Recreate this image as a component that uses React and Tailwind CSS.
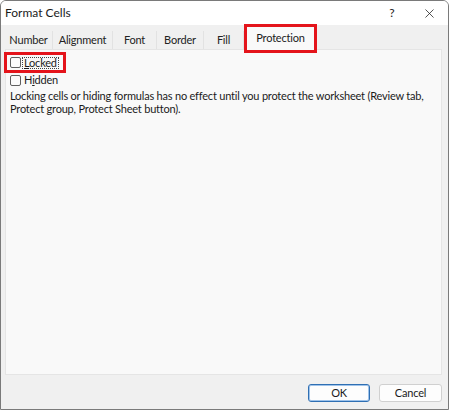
import { X } from "lucide-react";

const tabs = [
  { label: "Number", w: "w-[48px]" },
  { label: "Alignment", w: "w-[60px]" },
  { label: "Font", w: "w-[44px]" },
  { label: "Border", w: "w-[47px]" },
  { label: "Fill", w: "w-[40px]" },
];

export default function App() {
  return (
    <div
      className="w-[450px] h-[410px] bg-white text-[11px] text-[#1b1b1b] tracking-[-0.2px]"
      style={{ fontFamily: '"Segoe UI", Lato, "Noto Sans", sans-serif' }}
    >
      <div className="w-[449px] h-[410px] flex flex-col border border-[#7a7a7a] rounded-t-[6px] overflow-hidden bg-[#f0f0f0]">
        <div className="h-[24px] bg-white flex items-center pl-[4px] shrink-0 text-[12px] tracking-normal">
          <span className="flex-1">Format Cells</span>
          <span className="w-[20px] text-center text-[12px] mr-[17px]">?</span>
          <span className="w-[20px] flex justify-center mr-[9px]">
            <X size={15} strokeWidth={1.2} />
          </span>
        </div>

        <div className="flex-1 flex flex-col pl-[4px] pr-[6px]">
          <div className="flex items-end h-[24px]">
            {tabs.map((t) => (
              <div
                key={t.label}
                className={`${t.w} h-[18px] flex items-center justify-center border-r border-[#e2e2e2] text-[#222]`}
              >
                {t.label}
              </div>
            ))}
            <div className="ml-[3px] mb-[-1px] w-[67px] h-[23px] flex items-center justify-center bg-[#f9f9f9] outline-[3px] outline-[#e4141b] relative z-10">
              Protection
            </div>
          </div>

          <div className="h-[326px] bg-[#f9f9f9] border border-[#e5e5e5] pt-[2px] flex flex-col">
            <label className="flex items-center h-[21px] w-[62px] -ml-[2px] pl-[6px] outline-[3px] outline-[#e4141b] -outline-offset-[3px]">
              <span className="w-[11px] h-[11px] rounded-[2px] border border-[#5f5f5f] bg-[#fbfbfb]" />
              <span className="ml-[1px] h-[12px] leading-[10px] px-[1px] border border-dotted border-[#444]">
                <span className="underline underline-offset-[1px]">L</span>ocked
              </span>
            </label>
            <label className="flex items-center h-[14px] w-fit pl-[4px] gap-[3px]">
              <span className="w-[11px] h-[11px] rounded-[2px] border border-[#5f5f5f] bg-[#fbfbfb]" />
              <span>
                H<span className="underline underline-offset-[1px]">i</span>dden
              </span>
            </label>
            <p className="mt-[2px] leading-[13px] pl-[4px]">
              Locking cells or hiding formulas has no effect until you protect the worksheet (Review tab,
              Protect group, Protect Sheet button).
            </p>
          </div>

          <div className="flex justify-end gap-[9px] pt-[9px]">
            <button className="w-[62px] h-[18px] rounded-[3px] bg-[#fdfdfd] border border-[#2f6fb3] shadow-[inset_0_0_0_1px_#9fc3ea]">
              OK
            </button>
            <button className="w-[63px] h-[18px] rounded-[3px] bg-[#fdfdfd] border border-[#d0d0d0]">
              Cancel
            </button>
          </div>
        </div>
      </div>
    </div>
  );
}
